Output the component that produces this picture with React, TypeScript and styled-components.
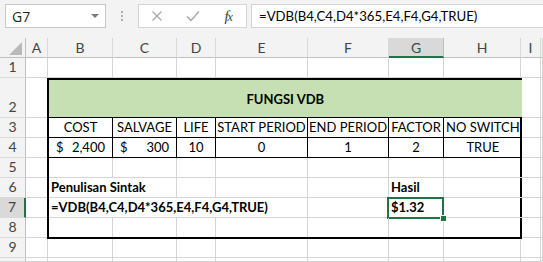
import React from 'react';
import styled, { createGlobalStyle, css } from 'styled-components';

const GlobalStyle = createGlobalStyle`
  html, body {
    margin: 0;
    padding: 0;
    background: #ffffff;
  }
  body {
    overflow: hidden;
  }
`;

const GRID_LINE = '#d4d4d4';
const HEADER_LINE = '#c0c0c0';
const EXCEL_GREEN = '#217346';
const CELL_FONT = `Lato, "Liberation Sans", sans-serif`;
const UI_FONT = `"Open Sans", "Noto Sans", sans-serif`;

const Window = styled.div`
  width: 543px;
  height: 262px;
  overflow: hidden;
  display: flex;
  flex-direction: column;
  background: #ffffff;
  font-family: ${CELL_FONT};
`;

/* ---------- formula bar ---------- */

const FormulaBar = styled.div`
  flex: none;
  height: 38px;
  box-sizing: border-box;
  padding: 4px 0 0 5px;
  display: flex;
  align-items: flex-start;
  background: #f3f3f3;
`;

const NameBox = styled.div`
  width: 101px;
  height: 24px;
  box-sizing: border-box;
  padding: 0 6px 0 6px;
  display: flex;
  align-items: center;
  justify-content: space-between;
  background: #ffffff;
  border: 1px solid #c6c6c6;
  font-family: ${UI_FONT};
  font-size: 14px;
  color: #262626;
`;

const DropArrow = styled.span`
  width: 0;
  height: 0;
  border-left: 4px solid transparent;
  border-right: 4px solid transparent;
  border-top: 4px solid #7a7a7a;
`;

const Grip = styled.div`
  width: 32px;
  height: 24px;
  display: flex;
  flex-direction: column;
  align-items: center;
  justify-content: center;
  gap: 2px;
`;

const GripDot = styled.span`
  width: 2px;
  height: 2px;
  background: #b0b0b0;
`;

const FormulaButtons = styled.div`
  width: 109px;
  height: 24px;
  box-sizing: border-box;
  display: flex;
  align-items: center;
  background: #ffffff;
  border: 1px solid #d4d4d4;
`;

const ButtonSlot = styled.div`
  width: 36px;
  height: 22px;
  display: flex;
  align-items: center;
  justify-content: center;
`;

const FxLabel = styled.span`
  font-family: "Liberation Serif", serif;
  font-style: italic;
  font-size: 15px;
  color: #3c3c3c;
  letter-spacing: -1px;

  small {
    font-size: 12px;
  }
`;

const FormulaInput = styled.div`
  flex: 1;
  height: 24px;
  margin-left: 4px;
  box-sizing: border-box;
  padding-left: 7px;
  display: flex;
  align-items: center;
  background: #ffffff;
  border: 1px solid #d4d4d4;
  border-right: none;
  font-family: ${CELL_FONT};
  font-size: 13.2px;
  color: #000000;
  white-space: nowrap;
`;

/* ---------- sheet ---------- */

const Sheet = styled.div`
  flex: 1;
  display: grid;
  grid-template-columns: 26px 22px 65px 64px 39px 92px 81px 55px 77px 20px 1fr;
  grid-template-rows: 20px 20px 40px repeat(6, 20px) 20px 1fr;
  font-size: 13px;
`;

const Corner = styled.div`
  background: #f3f3f3;
  border-right: 1px solid ${HEADER_LINE};
  border-bottom: 1px solid ${HEADER_LINE};
`;

const ColHeader = styled.div<{ $selected?: boolean }>`
  box-sizing: border-box;
  overflow: hidden;
  display: flex;
  align-items: center;
  justify-content: center;
  background: ${(p) => (p.$selected ? '#d9d9d9' : '#f3f3f3')};
  border-right: 1px solid ${(p) => (p.$selected ? '#c0c0c0' : '#d9d9d9')};
  border-bottom: ${(p) => (p.$selected ? `2px solid ${EXCEL_GREEN}` : `1px solid ${HEADER_LINE}`)};
  color: #444444;
  font-size: 14px;
`;

const RowHeader = styled.div<{ $selected?: boolean }>`
  box-sizing: border-box;
  overflow: hidden;
  display: flex;
  align-items: flex-end;
  justify-content: center;
  padding-bottom: 2px;
  background: ${(p) => (p.$selected ? '#d9d9d9' : '#f3f3f3')};
  border-right: ${(p) => (p.$selected ? `2px solid ${EXCEL_GREEN}` : `1px solid ${HEADER_LINE}`)};
  border-bottom: 1px solid #d9d9d9;
  color: #444444;
  font-size: 14px;
  line-height: 16px;
`;

const GridCell = styled.div`
  box-sizing: border-box;
  border-right: 1px solid ${GRID_LINE};
  border-bottom: 1px solid ${GRID_LINE};
`;

const FunctionBox = styled.div`
  grid-column: 3 / span 7;
  grid-row: 3 / span 7;
  margin: 0 -1px -1px -1px;
  position: relative;
  z-index: 1;
  display: grid;
  grid-template-columns: 64px 64px 39px 92px 81px 55px 1fr;
  grid-template-rows: 38px repeat(5, 20px) 1fr;
  background: #ffffff;
  border: 2px solid #000000;
`;

const TitleCell = styled.div`
  grid-column: 1 / span 7;
  display: flex;
  align-items: center;
  justify-content: center;
  padding-top: 1px;
  background: #c6e0b4;
  border-bottom: 1px solid #000000;
  font-weight: 700;
`;

type Line = 'black' | 'grid';

const Cell = styled.div<{
  $line: Line;
  $span?: number;
  $last?: boolean;
  $bottom?: boolean;
  $align?: 'left' | 'center';
  $bold?: boolean;
  $selected?: boolean;
}>`
  box-sizing: border-box;
  position: relative;
  grid-column: span ${(p) => p.$span ?? 1};
  display: flex;
  align-items: flex-end;
  justify-content: ${(p) => (p.$align === 'left' ? 'flex-start' : 'center')};
  padding: 0 2px 1px 2px;
  line-height: 17px;
  white-space: nowrap;
  color: #000000;
  font-weight: ${(p) => (p.$bold ? 700 : 400)};
  border-right: ${(p) => (p.$last ? 'none' : `1px solid ${p.$line === 'black' ? '#000000' : GRID_LINE}`)};
  border-bottom: ${(p) => (p.$bottom === false ? 'none' : `1px solid ${p.$line === 'black' ? '#000000' : GRID_LINE}`)};

  ${(p) =>
    p.$selected &&
    css`
      &::after {
        content: '';
        position: absolute;
        top: -1px;
        left: -2px;
        right: -1px;
        bottom: -2px;
        border: 2px solid ${EXCEL_GREEN};
        pointer-events: none;
      }
      &::before {
        content: '';
        position: absolute;
        right: -4px;
        bottom: -5px;
        width: 5px;
        height: 5px;
        background: ${EXCEL_GREEN};
        border: 1px solid #ffffff;
        z-index: 2;
      }
    `}
`;

const Accounting = styled(Cell)`
  justify-content: space-between;
  padding: 0 7px 1px 7px;
`;

const COLUMNS = ['A', 'B', 'C', 'D', 'E', 'F', 'G', 'H', 'I', 'J'];
const OUTSIDE_COLS = ['A', 'I', 'J'];

const CornerTriangle = () => (
  <svg width="25" height="19" viewBox="0 0 25 19">
    <polygon points="22,4 22,17 9,17" fill="#b9b9b9" />
  </svg>
);

const CrossIcon = () => (
  <svg width="12" height="12" viewBox="0 0 12 12">
    <path d="M1.5 1.5 L10.5 10.5 M10.5 1.5 L1.5 10.5" stroke="#a6a6a6" strokeWidth="1.2" fill="none" />
  </svg>
);

const CheckIcon = () => (
  <svg width="14" height="12" viewBox="0 0 14 12">
    <path d="M1 6.5 L5 10.5 L13 1.5" stroke="#a6a6a6" strokeWidth="1.4" fill="none" />
  </svg>
);

const headers = ['COST', 'SALVAGE', 'LIFE', 'START PERIOD', 'END PERIOD', 'FACTOR', 'NO SWITCH'];

export default function App() {
  const rows = Array.from({ length: 10 }, (_, i) => i + 1);

  return (
    <>
      <GlobalStyle />
      <Window>
        <FormulaBar>
          <NameBox>
            G7
            <DropArrow />
          </NameBox>
          <Grip>
            <GripDot />
            <GripDot />
            <GripDot />
          </Grip>
          <FormulaButtons>
            <ButtonSlot>
              <CrossIcon />
            </ButtonSlot>
            <ButtonSlot>
              <CheckIcon />
            </ButtonSlot>
            <ButtonSlot>
              <FxLabel>
                f<small>x</small>
              </FxLabel>
            </ButtonSlot>
          </FormulaButtons>
          <FormulaInput>=VDB(B4,C4,D4*365,E4,F4,G4,TRUE)</FormulaInput>
        </FormulaBar>

        <Sheet>
          <Corner>
            <CornerTriangle />
          </Corner>
          {COLUMNS.map((c) => (
            <ColHeader key={c} $selected={c === 'G'}>
              {c === 'J' ? '' : c}
            </ColHeader>
          ))}

          {rows.map((r) => {
            const inBox = r >= 2 && r <= 8;
            const cols = inBox ? OUTSIDE_COLS : COLUMNS;
            return (
              <React.Fragment key={r}>
                <RowHeader $selected={r === 7}>{r === 10 ? '' : r}</RowHeader>
                {cols.map((c) => (
                  <GridCell key={c + r} />
                ))}
              </React.Fragment>
            );
          })}

          <FunctionBox>
            <TitleCell>FUNGSI VDB</TitleCell>

            {headers.map((h, i) => (
              <Cell key={h} $line="black" $last={i === 6}>
                {h}
              </Cell>
            ))}

            <Accounting $line="black">
              <span>$</span>
              <span>2,400</span>
            </Accounting>
            <Accounting $line="black">
              <span>$</span>
              <span>300</span>
            </Accounting>
            <Cell $line="black">10</Cell>
            <Cell $line="black">0</Cell>
            <Cell $line="black">1</Cell>
            <Cell $line="black">2</Cell>
            <Cell $line="black" $last>
              TRUE
            </Cell>

            {Array.from({ length: 7 }, (_, i) => (
              <Cell key={'r5' + i} $line="grid" $last={i === 6} />
            ))}

            <Cell $line="grid" $span={2} $align="left" $bold>
              Penulisan Sintak
            </Cell>
            <Cell $line="grid" />
            <Cell $line="grid" />
            <Cell $line="grid" />
            <Cell $line="grid" $align="left" $bold>
              Hasil
            </Cell>
            <Cell $line="grid" $last />

            <Cell $line="grid" $span={4} $align="left" $bold>
              =VDB(B4,C4,D4*365,E4,F4,G4,TRUE)
            </Cell>
            <Cell $line="grid" />
            <Cell $line="grid" $align="left" $bold $selected>
              $1.32
            </Cell>
            <Cell $line="grid" $last />

            {Array.from({ length: 7 }, (_, i) => (
              <Cell key={'r8' + i} $line="grid" $last={i === 6} $bottom={false} />
            ))}
          </FunctionBox>
        </Sheet>
      </Window>
    </>
  );
}
